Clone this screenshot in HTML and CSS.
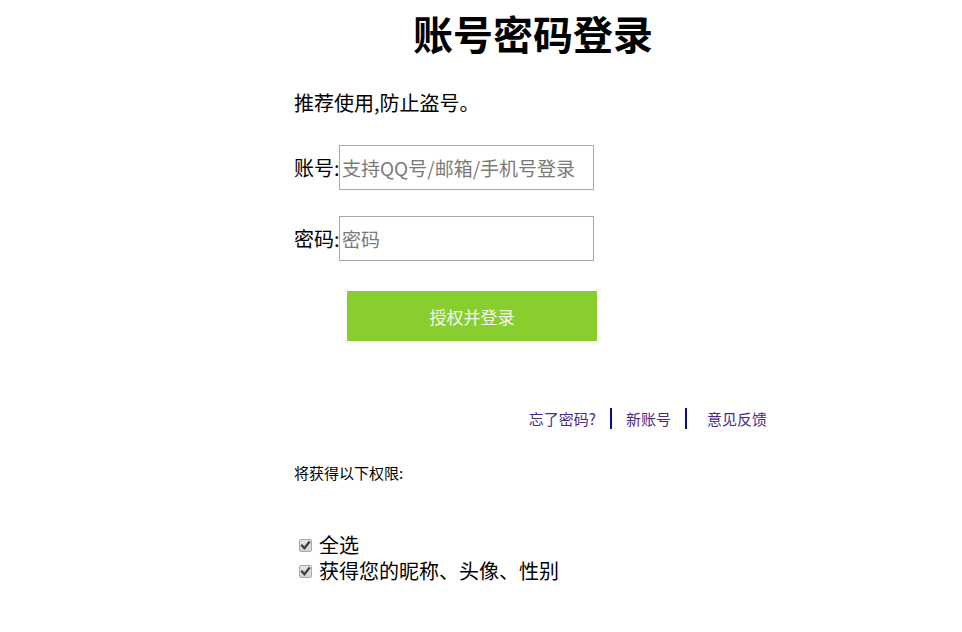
FILE: index.html
```html
<!DOCTYPE html>
<html lang="zh-CN">
<head>
<meta charset="utf-8">
<title>账号密码登录</title>
<link rel="stylesheet" href="styles.css">
</head>
<body>
<div class="page">
  <h1 class="title">账号密码登录</h1>
  <p class="tip">推荐使用,防止盗号。</p>
  <form class="form">
    <div class="field">
      <label class="label">账号:</label>
      <input class="input" type="text" placeholder="支持QQ号/邮箱/手机号登录">
    </div>
    <div class="field">
      <label class="label">密码:</label>
      <input class="input" type="password" placeholder="密码">
    </div>
    <button class="submit" type="button">授权并登录</button>
  </form>
  <div class="links">
    <a class="link" href="#">忘了密码?</a>
    <span class="sep"></span>
    <a class="link link-mid" href="#">新账号</a>
    <span class="sep"></span>
    <a class="link link-last" href="#">意见反馈</a>
  </div>
  <p class="perm-title">将获得以下权限:</p>
  <ul class="perms">
    <li class="perm"><span class="check"><svg viewBox="0 0 13 13" width="13" height="13"><path d="M3 6.6 L5.4 9.2 L10 3.4" fill="none" stroke="#3c3c3c" stroke-width="2.2" stroke-linecap="square"/></svg></span>全选</li>
    <li class="perm"><span class="check"><svg viewBox="0 0 13 13" width="13" height="13"><path d="M3 6.6 L5.4 9.2 L10 3.4" fill="none" stroke="#3c3c3c" stroke-width="2.2" stroke-linecap="square"/></svg></span>获得您的昵称、头像、性别</li>
  </ul>
</div>
</body>
</html>
```

FILE: styles.css
```css
html, body {
  margin: 0;
  padding: 0;
  background: #fff;
}
body {
  font-family: "Noto Sans CJK SC", "Liberation Sans", sans-serif;
  color: #000;
}
.page {
  margin-left: 294px;
  width: 478px;
}
.title {
  margin: 9px 0 0;
  font-size: 40px;
  line-height: 48px;
  font-weight: 700;
  text-align: center;
}
.tip {
  margin: 32px 0 0;
  font-size: 20px;
  line-height: 28px;
}
.form {
  margin: 28px 0 0;
}
.field {
  display: flex;
  align-items: center;
  height: 45px;
  margin-bottom: 26px;
}
.label {
  width: 45px;
  font-size: 20px;
  line-height: 28px;
  white-space: nowrap;
}
.input {
  box-sizing: border-box;
  width: 255px;
  height: 45px;
  margin: 0;
  padding: 0 2px;
  border: 1px solid #a9a9a9;
  font-family: "Noto Sans CJK SC", "Liberation Sans", sans-serif;
  font-size: 19px;
  color: #000;
  outline: none;
}
.input::placeholder {
  color: #7a7a7a;
}
.submit {
  display: block;
  width: 250px;
  height: 50px;
  margin: 30px 0 0 53px;
  border: none;
  padding: 0;
  background: #88ce2e;
  color: #f4f7ee;
  font-family: "Noto Sans CJK SC", "Liberation Sans", sans-serif;
  font-size: 17px;
}
.links {
  display: flex;
  justify-content: flex-end;
  align-items: center;
  margin-top: 67px;
  padding-right: 5px;
  height: 21px;
}
.link {
  font-size: 15px;
  line-height: 20px;
  color: #4b2a84;
  text-decoration: none;
}
.sep {
  width: 2px;
  height: 21px;
  background: #0a0a8c;
  margin: 0 14px 0 14px;
}
.link-mid + .sep {
  margin-right: 20px;
}
.perm-title {
  margin: 34px 0 0;
  font-size: 15px;
  line-height: 20px;
}
.perms {
  list-style: none;
  margin: 49px 0 0;
  padding: 0 0 0 5px;
}
.perm {
  display: flex;
  align-items: center;
  font-size: 20px;
  line-height: 26px;
}
.check {
  box-sizing: border-box;
  display: inline-flex;
  width: 13px;
  height: 13px;
  margin-right: 7px;
  border: 1px solid #a8a8a8;
  border-radius: 2px;
  background: linear-gradient(#e6e6e6, #d4d4d4);
  overflow: hidden;
}
.check svg {
  display: block;
  margin: -1px;
}
```
